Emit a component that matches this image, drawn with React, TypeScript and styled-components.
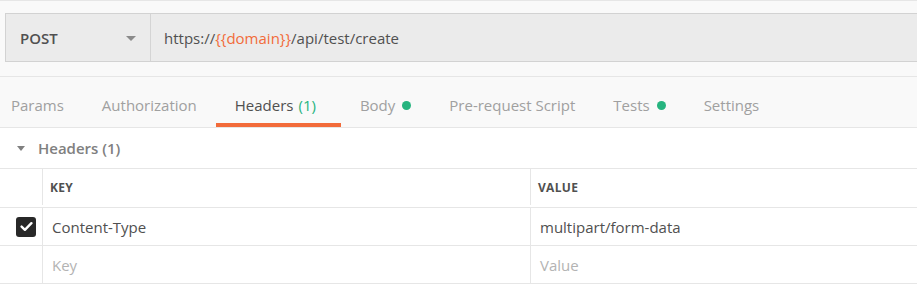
import React from "react";
import styled, { createGlobalStyle } from "styled-components";

const GlobalStyle = createGlobalStyle`
  html, body { margin: 0; padding: 0; background: #ffffff; }
  body { font-family: "Open Sans", "Noto Sans", sans-serif; font-size: 15px; color: #505050; }
  * { box-sizing: border-box; }
`;

const Page = styled.div`
  width: 917px;
  height: 290px;
  overflow: hidden;
  background: #ffffff;
`;

const UrlSection = styled.div`
  background: #f9f9f9;
  border-top: 1px solid #e6e6e6;
  border-bottom: 1px solid #e6e6e6;
  padding: 12px 0 14px 5px;
`;

const UrlBar = styled.div`
  display: flex;
  height: 49px;
  background: #ebebeb;
  border: 1px solid #d2d2d2;
  border-right: none;
`;

const Method = styled.div`
  width: 145px;
  flex: none;
  display: flex;
  align-items: center;
  justify-content: space-between;
  padding: 0 14px 0 14px;
  border-right: 1px solid #d4d4d4;
  font-size: 15px;
  font-weight: 600;
  color: #505050;
`;

const Caret = styled.span`
  width: 0;
  height: 0;
  border-left: 5px solid transparent;
  border-right: 5px solid transparent;
  border-top: 5px solid #8a8a8a;
  margin-top: 2px;
`;

const UrlText = styled.div`
  display: flex;
  align-items: center;
  padding-left: 13px;
  font-size: 15px;
  color: #505050;
`;

const Variable = styled.span`
  color: #f26b3a;
`;

const Tabs = styled.div`
  display: flex;
  height: 51px;
  background: #f9f9f9;
  border-bottom: 1px solid #e6e6e6;
`;

const Tab = styled.div<{ $active?: boolean; $first?: boolean }>`
  display: flex;
  align-items: center;
  padding: 10px 19px 0 ${(p) => (p.$first ? "11px" : "19px")};
  border-bottom: 4px solid ${(p) => (p.$active ? "#f26b3a" : "transparent")};
  color: ${(p) => (p.$active ? "#505050" : "#a0a0a0")};
  font-size: 15px;
  white-space: nowrap;
`;

const Count = styled.span`
  color: #26b47f;
  margin-left: 5px;
  padding-right: 6px;
`;

const Dot = styled.span`
  width: 9px;
  height: 9px;
  border-radius: 50%;
  background: #26b47f;
  margin-left: 7px;
`;

const SectionTitle = styled.div`
  display: flex;
  align-items: center;
  height: 40px;
  padding: 0 0 0 17px;
  font-size: 15px;
  font-weight: 600;
  color: #808080;
`;

const Triangle = styled.span`
  width: 0;
  height: 0;
  border-left: 4px solid transparent;
  border-right: 4px solid transparent;
  border-top: 5px solid #808080;
  margin-right: 13px;
  margin-top: 1px;
`;

const Table = styled.div`
  border-top: 1px solid #e6e6e6;
`;

const Row = styled.div<{ $h: number }>`
  display: grid;
  grid-template-columns: 42px 488px 1fr;
  height: ${(p) => p.$h}px;
  border-bottom: 1px solid #e6e6e6;
`;

const Cell = styled.div<{ $head?: boolean; $muted?: boolean; $divider?: boolean }>`
  display: flex;
  align-items: center;
  border-left: ${(p) => (p.$divider ? "1px solid #e6e6e6" : "none")};
  padding-left: ${(p) => (p.$head ? "7px" : "9px")};
  margin-bottom: ${(p) => (p.$head ? "2px" : "0")};
  font-size: ${(p) => (p.$head ? "12px" : "15px")};
  font-weight: ${(p) => (p.$head ? 700 : 400)};
  letter-spacing: ${(p) => (p.$head ? "0.3px" : "0")};
  color: ${(p) => (p.$muted ? "#b3b3b3" : "#505050")};
`;

const CheckCell = styled.div`
  display: flex;
  align-items: center;
  padding-left: 16px;
`;

const Checkbox = styled.span`
  width: 20px;
  height: 20px;
  border-radius: 3px;
  background: #282828;
  display: flex;
  align-items: center;
  justify-content: center;
`;

export default function App() {
  return (
    <Page>
      <GlobalStyle />
      <UrlSection>
        <UrlBar>
          <Method>
            POST
            <Caret />
          </Method>
          <UrlText>
            https://<Variable>{"{{domain}}"}</Variable>/api/test/create
          </UrlText>
        </UrlBar>
      </UrlSection>
      <Tabs>
        <Tab $first>Params</Tab>
        <Tab>Authorization</Tab>
        <Tab $active>
          Headers<Count>(1)</Count>
        </Tab>
        <Tab>
          Body<Dot />
        </Tab>
        <Tab>Pre-request Script</Tab>
        <Tab>
          Tests<Dot />
        </Tab>
        <Tab>Settings</Tab>
      </Tabs>
      <SectionTitle>
        <Triangle />
        Headers (1)
      </SectionTitle>
      <Table>
        <Row $h={39}>
          <Cell />
          <Cell $head $divider>KEY</Cell>
          <Cell $head $divider>VALUE</Cell>
        </Row>
        <Row $h={38}>
          <CheckCell>
            <Checkbox>
              <svg width="13" height="11" viewBox="0 0 13 11">
                <path d="M1.6 5.6 L4.9 8.8 L11.4 2.2" fill="none" stroke="#ffffff" strokeWidth="2.4" strokeLinecap="round" strokeLinejoin="round" />
              </svg>
            </Checkbox>
          </CheckCell>
          <Cell $divider>Content-Type</Cell>
          <Cell $divider>multipart/form-data</Cell>
        </Row>
        <Row $h={38}>
          <Cell />
          <Cell $divider $muted>Key</Cell>
          <Cell $divider $muted>Value</Cell>
        </Row>
      </Table>
    </Page>
  );
}
